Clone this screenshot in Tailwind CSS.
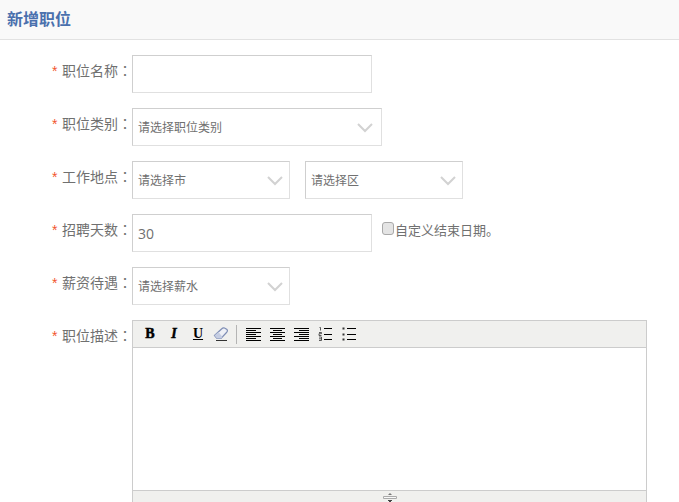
<!DOCTYPE html>
<html>
<head>
  <meta charset="UTF-8">
  <meta name="viewport" content="width=device-width, initial-scale=1.0">
  <script src="https://cdn.jsdelivr.net/npm/@tailwindcss/browser@4"></script>
</head>
<body class="bg-white h-[502px] overflow-hidden font-['Liberation_Sans','Noto_Sans_CJK_SC',sans-serif] text-[#707070]">
  <!-- Header -->
  <div class="h-10 bg-[#f9f9f9] border-b border-[#e2e2e2] pl-[7px] leading-[39px] text-[16px] font-bold text-[#4a70ad]">新增职位</div>

  <form class="pt-[15px] flex flex-col gap-[15px]">
    <!-- name -->
    <div class="flex">
      <label class="w-[132px] pl-[52px] pt-[5px] text-[14px] leading-5 whitespace-nowrap"><span class="text-[#f2562d] inline-block w-[10px]">*</span>职位名称<span class="font-['Noto_Sans_CJK_TC',sans-serif]">：</span></label>
      <div class="w-[240px] h-[38px] border border-[#e0e0e0] border-t-[#cfcfcf] border-l-[#cfcfcf]"></div>
    </div>

    <!-- category -->
    <div class="flex">
      <label class="w-[132px] pl-[52px] pt-[5px] text-[14px] leading-5 whitespace-nowrap"><span class="text-[#f2562d] inline-block w-[10px]">*</span>职位类别<span class="font-['Noto_Sans_CJK_TC',sans-serif]">：</span></label>
      <div class="w-[250px] h-[38px] border border-[#e0e0e0] border-t-[#cfcfcf] border-l-[#cfcfcf] flex items-center justify-between pl-[5px] pr-[8px]">
        <span class="text-[12px] pt-[2px]">请选择职位类别</span>
        <svg class="w-[16px] h-[10px] mt-[2px]" viewBox="0 0 16 10" fill="none" stroke="#d2d2d2" stroke-width="2"><path d="M1 1l7 7 7-7"/></svg>
      </div>
    </div>

    <!-- location -->
    <div class="flex">
      <label class="w-[132px] pl-[52px] pt-[5px] text-[14px] leading-5 whitespace-nowrap"><span class="text-[#f2562d] inline-block w-[10px]">*</span>工作地点<span class="font-['Noto_Sans_CJK_TC',sans-serif]">：</span></label>
      <div class="flex gap-[15px]">
        <div class="w-[158px] h-[38px] border border-[#e0e0e0] border-t-[#cfcfcf] border-l-[#cfcfcf] flex items-center justify-between pl-[5px] pr-[6px]">
          <span class="text-[12px] pt-[2px]">请选择市</span>
          <svg class="w-[16px] h-[10px] mt-[2px]" viewBox="0 0 16 10" fill="none" stroke="#d2d2d2" stroke-width="2"><path d="M1 1l7 7 7-7"/></svg>
        </div>
        <div class="w-[158px] h-[38px] border border-[#e0e0e0] border-t-[#cfcfcf] border-l-[#cfcfcf] flex items-center justify-between pl-[5px] pr-[6px]">
          <span class="text-[12px] pt-[2px]">请选择区</span>
          <svg class="w-[16px] h-[10px] mt-[2px]" viewBox="0 0 16 10" fill="none" stroke="#d2d2d2" stroke-width="2"><path d="M1 1l7 7 7-7"/></svg>
        </div>
      </div>
    </div>

    <!-- days -->
    <div class="flex">
      <label class="w-[132px] pl-[52px] pt-[5px] text-[14px] leading-5 whitespace-nowrap"><span class="text-[#f2562d] inline-block w-[10px]">*</span>招聘天数<span class="font-['Noto_Sans_CJK_TC',sans-serif]">：</span></label>
      <div class="w-[240px] h-[38px] border border-[#e0e0e0] border-t-[#cfcfcf] border-l-[#cfcfcf] flex items-center pl-[5px] text-[14px] font-['Open_Sans',sans-serif]">30</div>
      <div class="flex items-start pl-[10px] pt-[8px]">
        <span class="w-[12px] h-[13px] mr-px rounded-[3px] border border-[#a9a9a9] bg-[#e4e4e4]"></span>
        <span class="text-[13px] leading-[16px] pt-px">自定义结束日期。</span>
      </div>
    </div>

    <!-- salary -->
    <div class="flex">
      <label class="w-[132px] pl-[52px] pt-[5px] text-[14px] leading-5 whitespace-nowrap"><span class="text-[#f2562d] inline-block w-[10px]">*</span>薪资待遇<span class="font-['Noto_Sans_CJK_TC',sans-serif]">：</span></label>
      <div class="w-[158px] h-[38px] border border-[#e0e0e0] border-t-[#cfcfcf] border-l-[#cfcfcf] flex items-center justify-between pl-[5px] pr-[6px]">
        <span class="text-[12px] pt-[2px]">请选择薪水</span>
        <svg class="w-[16px] h-[10px] mt-[2px]" viewBox="0 0 16 10" fill="none" stroke="#d2d2d2" stroke-width="2"><path d="M1 1l7 7 7-7"/></svg>
      </div>
    </div>

    <!-- description -->
    <div class="flex">
      <label class="w-[132px] pl-[52px] pt-[5px] text-[14px] leading-5 whitespace-nowrap"><span class="text-[#f2562d] inline-block w-[10px]">*</span>职位描述<span class="font-['Noto_Sans_CJK_TC',sans-serif]">：</span></label>
      <div class="w-[515px] h-[200px] border border-[#ccc] flex flex-col">
        <!-- toolbar -->
        <div class="h-[27px] shrink-0 bg-[#f0f0ee] border-b border-[#ccc] flex items-center pl-[10px] text-black">
          <span class="w-[14px] text-center text-[14px] font-bold font-['Liberation_Serif',serif] leading-none [-webkit-text-stroke:0.5px_#000]">B</span>
          <span class="w-[14px] ml-[10px] text-center text-[14px] font-bold italic font-['Liberation_Serif',serif] leading-none [-webkit-text-stroke:0.5px_#000]">I</span>
          <span class="w-[14px] ml-[10px] text-center text-[14px] font-bold underline font-['Liberation_Serif',serif] leading-none">U</span>
          <svg class="w-[16px] h-[14px] ml-[8px]" viewBox="0 0 16 14" fill="none"><path d="M1.500 8.500L8.500 2q1.500-1.500 3-1l2.500 1.500q1 1.500-.5 3L8 11.500H4z" fill="#eef0f6" stroke="#7e8db5" stroke-width="1.200"/><path d="M1.500 8.500L4 11.500H8L9.500 10 5.500 5z" fill="#c5cde2"/><path d="M3 13.500h11" stroke="#333"/></svg>
          <span class="w-px h-[19px] bg-[#b4b4b4] ml-[7px] mr-[9px]"></span>
          <svg class="w-[15px] h-[13px]" viewBox="0 0 15 13" fill="none" stroke="#000"><path d="M0 .5h15M0 2.500h10M0 4.500h15M0 6.500h10M0 8.500h15M0 10.500h10M0 12.500h15"/></svg>
          <svg class="w-[15px] h-[13px] ml-[9px]" viewBox="0 0 15 13" fill="none" stroke="#000"><path d="M0 .5h15M3 2.500h9M0 4.500h15M3 6.500h9M0 8.500h15M3 10.500h9M0 12.500h15"/></svg>
          <svg class="w-[15px] h-[13px] ml-[9px]" viewBox="0 0 15 13" fill="none" stroke="#000"><path d="M0 .5h15M5 2.500h10M0 4.500h15M5 6.500h10M0 8.500h15M5 10.500h10M0 12.500h15"/></svg>
          <svg class="w-[14px] h-[14px] ml-[9px]" viewBox="0 0 14 14" fill="none" stroke="#000"><path d="M6 1.500h8M6 7.500h8M6 12.500h8"/><path d="M1.500.5h1v3M1 5.500h2.500v1.200H1v1.800h2.500M1 10h2.500v3.500H1M1 11.800h2.500" stroke="#333" stroke-width=".8"/></svg>
          <svg class="w-[14px] h-[14px] ml-[10px]" viewBox="0 0 14 14" fill="none" stroke="#000"><path d="M5 1.500h9M5 7.500h9M5 12.500h9"/><path d="M.5 .5h2v2h-2zM.5 6.500h2v2h-2zM.5 11.500h2v2h-2z" fill="#333" stroke="none"/></svg>
        </div>
        <div class="h-[143px] shrink-0 bg-white border-b border-[#ccc]"></div>
        <!-- resize bar -->
        <div class="flex-1 bg-[#f0f0ee] flex justify-center pt-[2px]">
          <svg class="w-[16px] h-[10px]" viewBox="0 0 16 10" fill="none"><path d="M7.500 0h1v1h1v1h-3v-1h1z" fill="#777"/><path d="M1.500 3.500h13v2h-13z" fill="#f8f8f8" stroke="#aaa"/><path d="M6 7h4v1h-1v1h-2v-1h-1z" fill="#444"/></svg>
        </div>
      </div>
    </div>
  </form>
</body>
</html>
